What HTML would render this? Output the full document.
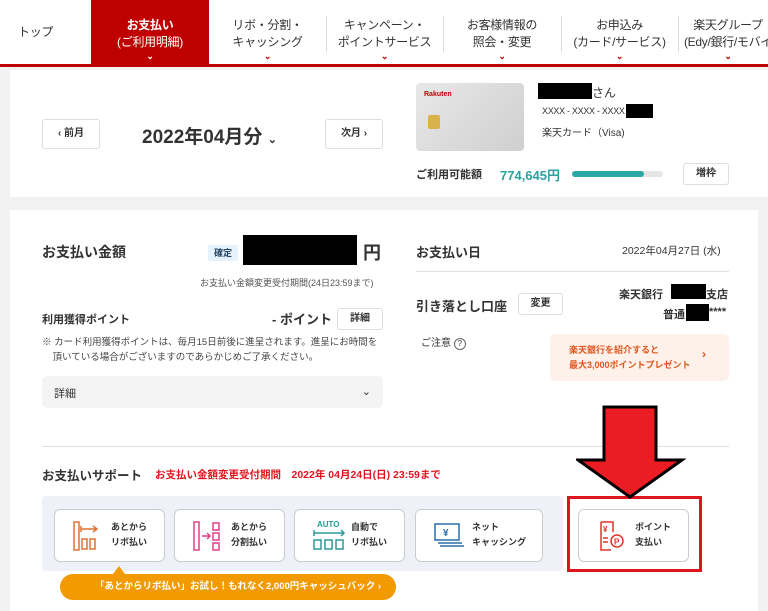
<!DOCTYPE html>
<html><head><meta charset="utf-8"><style>
*{box-sizing:border-box;margin:0;padding:0}
body{width:768px;height:611px;overflow:hidden;background:#f2f2f2;font-family:"Liberation Sans","Noto Sans CJK JP",sans-serif;color:#333;position:relative}
.a{position:absolute}
.nav{left:0;top:0;width:768px;height:67px;background:#fff;border-bottom:3px solid #bf0000}
.tab{position:absolute;top:0;height:64px;text-align:center;font-size:12px;line-height:17px;padding-top:17px;color:#333;letter-spacing:-0.3px}
.tab .ch{color:#bf0000;font-size:9px;line-height:10px;font-weight:bold}
.sep{position:absolute;top:16px;width:1px;height:36px;background:#ddd}
.btn{position:absolute;background:#fff;border:1px solid #ddd;border-radius:3px;font-size:10px;text-align:center;font-weight:bold}
.sb{position:absolute;background:#fff;border:1px solid #ccc;border-radius:6px;font-size:9px;font-weight:bold;line-height:15px}
</style></head><body>
<div class="a nav">
 <div class="tab" style="left:0;width:91px;padding-top:24px;text-align:left;padding-left:18px">トップ</div>
 <div class="tab" style="left:91px;width:118px;background:#bf0000;color:#fff;font-weight:bold">お支払い<br><span style="font-weight:normal">(ご利用明細)</span><div class="ch" style="color:#fff">⌄</div></div>
 <div class="tab" style="left:209px;width:117px">リボ・分割・<br>キャッシング<div class="ch">⌄</div></div>
 <div class="sep" style="left:326px"></div>
 <div class="tab" style="left:326px;width:117px">キャンペーン・<br>ポイントサービス<div class="ch">⌄</div></div>
 <div class="sep" style="left:443px"></div>
 <div class="tab" style="left:443px;width:118px">お客様情報の<br>照会・変更<div class="ch">⌄</div></div>
 <div class="sep" style="left:561px"></div>
 <div class="tab" style="left:561px;width:117px">お申込み<br>(カード/サービス)<div class="ch">⌄</div></div>
 <div class="sep" style="left:678px"></div>
 <div class="tab" style="left:678px;width:100px;white-space:nowrap">楽天グループ<br>(Edy/銀行/モバイ<div class="ch">⌄</div></div>
</div>

<div class="a" style="left:10px;top:70px;width:758px;height:127px;background:#fff"></div>
<div class="btn" style="left:42px;top:119px;width:58px;height:30px;line-height:28px">‹ 前月</div>
<div class="a" style="left:142px;top:122px;font-size:19px;font-weight:bold">2022年04月分 <span style="font-size:11px">⌄</span></div>
<div class="btn" style="left:325px;top:119px;width:58px;height:30px;line-height:28px">次月 ›</div>
<div class="a" style="left:416px;top:83px;width:108px;height:68px;border-radius:4px;background:linear-gradient(135deg,#e8e8e8,#cfcfcf)">
 <div class="a" style="left:8px;top:8px;color:#bf0000;font-size:7px;font-weight:bold">Rakuten</div>
 <div class="a" style="left:12px;top:32px;width:12px;height:14px;background:#d9b24a;border-radius:2px"></div>
</div>
<div class="a" style="left:538px;top:83px;width:54px;height:16px;background:#000"></div>
<div class="a" style="left:592px;top:84px;font-size:12px">さん</div>
<div class="a" style="left:542px;top:106px;font-size:9px;letter-spacing:-0.3px">XXXX - XXXX - XXXX</div>
<div class="a" style="left:626px;top:104px;width:27px;height:14px;background:#000"></div>
<div class="a" style="left:542px;top:124px;font-size:10px">楽天カード（Visa)</div>
<div class="a" style="left:416px;top:166px;font-size:11px;font-weight:bold">ご利用可能額</div>
<div class="a" style="left:500px;top:165px;font-size:13px;color:#2aa3a0;font-weight:bold">774,645円</div>
<div class="a" style="left:572px;top:171px;width:91px;height:6px;background:#e5e5e5;border-radius:3px"><div style="width:72px;height:6px;background:#2aa8a6;border-radius:3px"></div></div>
<div class="btn" style="left:683px;top:163px;width:46px;height:22px;line-height:20px">増枠</div>

<div class="a" style="left:10px;top:210px;width:748px;height:401px;background:#fff"></div>
<div class="a" style="left:42px;top:242px;font-size:14px;font-weight:bold">お支払い金額</div>
<div class="a" style="left:208px;top:245px;width:30px;height:16px;background:#e6f2fb;font-size:9px;font-weight:bold;text-align:center;line-height:16px;color:#246">確定</div>
<div class="a" style="left:243px;top:235px;width:114px;height:30px;background:#000"></div>
<div class="a" style="left:363px;top:239px;font-size:18px;font-weight:bold">円</div>
<div class="a" style="left:200px;top:276px;font-size:9px;color:#555">お支払い金額変更受付期間(24日23:59まで)</div>
<div class="a" style="left:42px;top:311px;font-size:11px;font-weight:bold">利用獲得ポイント</div>
<div class="a" style="left:272px;top:309px;font-size:13px;font-weight:bold">- ポイント</div>
<div class="btn" style="left:337px;top:308px;width:46px;height:22px;line-height:20px">詳細</div>
<div class="a" style="left:42px;top:335px;font-size:9.5px;line-height:15px;color:#444;width:345px">※ カード利用獲得ポイントは、毎月15日前後に進呈されます。進呈にお時間を<br>&nbsp;&nbsp;&nbsp;&nbsp;頂いている場合がございますのであらかじめご了承ください。</div>
<div class="a" style="left:42px;top:376px;width:341px;height:32px;background:#f3f3f3;border-radius:6px;font-size:11px;padding:9px 12px">詳細<span style="float:right">⌄</span></div>

<div class="a" style="left:416px;top:242px;font-size:13px;font-weight:bold">お支払い日</div>
<div class="a" style="left:622px;top:243px;font-size:10.5px">2022年04月27日 (水)</div>
<div class="a" style="left:416px;top:271px;width:313px;height:1px;background:#e0e0e0"></div>
<div class="a" style="left:416px;top:296px;font-size:13px;font-weight:bold">引き落とし口座</div>
<div class="btn" style="left:518px;top:293px;width:45px;height:22px;line-height:20px">変更</div>
<div class="a" style="left:619px;top:286px;font-size:11px;font-weight:bold">楽天銀行</div>
<div class="a" style="left:671px;top:284px;width:35px;height:15px;background:#000"></div>
<div class="a" style="left:706px;top:286px;font-size:11px;font-weight:bold">支店</div>
<div class="a" style="left:663px;top:306px;font-size:11px;font-weight:bold">普通</div>
<div class="a" style="left:686px;top:304px;width:23px;height:17px;background:#000"></div>
<div class="a" style="left:709px;top:306px;font-size:11px;font-weight:bold">****</div>
<div class="a" style="left:421px;top:334px;font-size:10px">ご注意 <span style="display:inline-block;width:12px;height:12px;border:1px solid #666;border-radius:50%;font-size:8px;text-align:center;line-height:10px">?</span></div>
<div class="a" style="left:550px;top:334px;width:179px;height:47px;background:#fdf1ea;border-radius:6px;color:#e0561e;font-size:9px;font-weight:bold;line-height:15px;padding:9px 0 0 19px">楽天銀行を紹介すると<br>最大3,000ポイントプレゼント<span class="a" style="left:152px;top:13px;font-size:12px">›</span></div>

<div class="a" style="left:42px;top:446px;width:687px;height:1px;background:#e0e0e0"></div>
<div class="a" style="left:42px;top:465px;font-size:12.5px;font-weight:bold">お支払いサポート</div>
<div class="a" style="left:155px;top:467px;font-size:10.5px;font-weight:bold;color:#e0141e">お支払い金額変更受付期間　2022年 04月24日(日) 23:59まで</div>
<div class="a" style="left:42px;top:496px;width:521px;height:75px;background:#eef1f8;border-radius:4px"></div>
<div class="sb" style="left:54px;top:509px;width:111px;height:53px;padding:10px 0 0 56px">あとから<br>リボ払い<svg class="a" style="left:18px;top:11px" width="30" height="30" viewBox="0 0 30 30" fill="none" stroke="#e07030" stroke-width="1.5"><rect x="1" y="1" width="5" height="28"/><path d="M8 8h16M20 5l4 3-4 3M8 5v6"/><rect x="9" y="18" width="5" height="10"/><rect x="17" y="18" width="5" height="10"/></svg></div>
<div class="sb" style="left:174px;top:509px;width:111px;height:53px;padding:10px 0 0 56px">あとから<br>分割払い<svg class="a" style="left:18px;top:11px" width="30" height="30" viewBox="0 0 30 30" fill="none" stroke="#e0408a" stroke-width="1.5"><rect x="1" y="1" width="5" height="28"/><path d="M9 15h8M14 12l3 3-3 3"/><rect x="20" y="2" width="6" height="7"/><rect x="20" y="12" width="6" height="7"/><rect x="20" y="22" width="6" height="7"/></svg></div>
<div class="sb" style="left:294px;top:509px;width:111px;height:53px;padding:10px 0 0 56px">自動で<br>リボ払い<svg class="a" style="left:18px;top:8px" width="34" height="34" viewBox="0 0 34 34" fill="none" stroke="#2a9a98" stroke-width="1.5"><text x="4" y="9" font-size="8" fill="#2a9a98" stroke="none" font-weight="bold">AUTO</text><path d="M1 15h30M28 12l3 3-3 3M1 12v6"/><rect x="1" y="22" width="7" height="9"/><rect x="12" y="22" width="7" height="9"/><rect x="23" y="22" width="7" height="9"/></svg></div>
<div class="sb" style="left:415px;top:509px;width:128px;height:53px;padding:10px 0 0 56px">ネット<br>キャッシング<svg class="a" style="left:18px;top:12px" width="30" height="26" viewBox="0 0 30 26" fill="none" stroke="#2a6fa8" stroke-width="1.5"><rect x="1" y="2" width="24" height="16"/><path d="M4 21h24M6 24h24"/><text x="9" y="14" font-size="10" fill="#2a6fa8" stroke="none">¥</text></svg></div>
<div class="sb" style="left:578px;top:509px;width:111px;height:53px;padding:10px 0 0 56px">ポイント<br>支払い<svg class="a" style="left:18px;top:11px" width="30" height="30" viewBox="0 0 30 30" fill="none" stroke="#e0342a" stroke-width="1.5"><path d="M4 1h12v10M4 1v28h10"/><text x="6" y="11" font-size="8" fill="#e0342a" stroke="none">¥</text><path d="M6 17h5M6 21h5"/><circle cx="20" cy="20" r="6"/><text x="17" y="23.5" font-size="8" fill="#e0342a" stroke="none">P</text></svg></div>
<div class="a" style="left:567px;top:496px;width:135px;height:76px;border:3px solid #e0141e"></div>
<svg class="a" style="left:576px;top:405px" width="110" height="95" viewBox="0 0 110 95"><polygon points="28,2 80,2 80,55 106,55 54,92 2,55 28,55" fill="#ec1c24" stroke="#000" stroke-width="3"/></svg>
<div class="a" style="left:113px;top:566px;width:0;height:0;border-left:6px solid transparent;border-right:6px solid transparent;border-bottom:8px solid #f39a00"></div>
<div class="a" style="left:60px;top:574px;width:336px;height:26px;background:#f39a00;border-radius:13px;color:#fff;font-size:9.5px;font-weight:bold;line-height:26px;padding-left:35px">「あとからリボ払い」お試し！もれなく2,000円キャッシュバック ›</div>
</body></html>
